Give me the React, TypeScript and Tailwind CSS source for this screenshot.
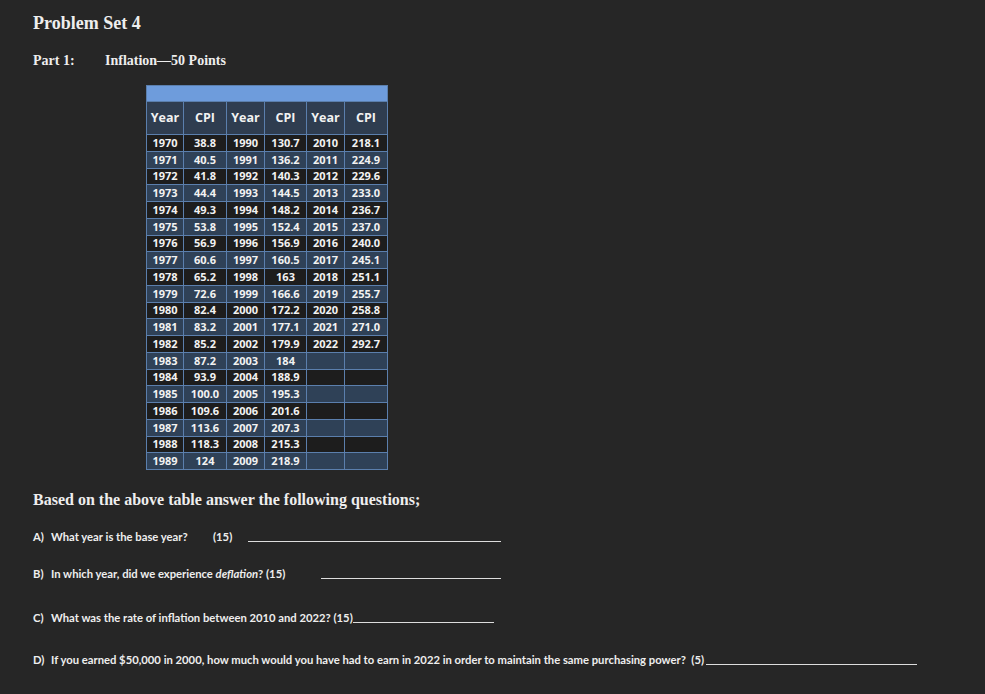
const rows: [string, string, string, string, string, string][] = [
  ["1970", "38.8", "1990", "130.7", "2010", "218.1"],
  ["1971", "40.5", "1991", "136.2", "2011", "224.9"],
  ["1972", "41.8", "1992", "140.3", "2012", "229.6"],
  ["1973", "44.4", "1993", "144.5", "2013", "233.0"],
  ["1974", "49.3", "1994", "148.2", "2014", "236.7"],
  ["1975", "53.8", "1995", "152.4", "2015", "237.0"],
  ["1976", "56.9", "1996", "156.9", "2016", "240.0"],
  ["1977", "60.6", "1997", "160.5", "2017", "245.1"],
  ["1978", "65.2", "1998", "163", "2018", "251.1"],
  ["1979", "72.6", "1999", "166.6", "2019", "255.7"],
  ["1980", "82.4", "2000", "172.2", "2020", "258.8"],
  ["1981", "83.2", "2001", "177.1", "2021", "271.0"],
  ["1982", "85.2", "2002", "179.9", "2022", "292.7"],
  ["1983", "87.2", "2003", "184", "", ""],
  ["1984", "93.9", "2004", "188.9", "", ""],
  ["1985", "100.0", "2005", "195.3", "", ""],
  ["1986", "109.6", "2006", "201.6", "", ""],
  ["1987", "113.6", "2007", "207.3", "", ""],
  ["1988", "118.3", "2008", "215.3", "", ""],
  ["1989", "124", "2009", "218.9", "", ""],
]

const colW = ["w-[37px]", "w-[43px]", "w-[38px]", "w-[42px]", "w-[38px]", "w-[43px]"]
const heads = ["Year", "CPI", "Year", "CPI", "Year", "CPI"]

const serif = { fontFamily: '"Liberation Serif", "Times New Roman", serif' }
const body = { fontFamily: 'Lato, "Open Sans", sans-serif' }

export default function App() {
  return (
    <div className="w-[985px] h-[694px] bg-[#262626] pl-[33px] pt-[13px] text-[#eeeeee] overflow-hidden">
      <h1 style={serif} className="text-[18px] font-bold leading-[20px]">Problem Set 4</h1>
      <div style={serif} className="flex mt-[19px] text-[14px] font-bold leading-[18px]">
        <span className="w-[72px]">Part 1:</span>
        <span>Inflation—50 Points</span>
      </div>

      <table
        style={{ fontFamily: '"Open Sans", "DejaVu Sans", sans-serif' }}
        className="ml-[113px] mt-[15px] border-collapse text-[11px] font-bold text-[#f2f2f2]"
      >
        <tbody>
          <tr className="h-[16px] bg-[#6e9cdc]">
            <td colSpan={6} className="border border-[#5b7fad]"></td>
          </tr>
          <tr className="h-[33px] bg-[#2f3d50]">
            {heads.map((h, i) => (
              <td key={i} className={`${colW[i]} border border-[#5b7fad] text-center text-[12.5px] p-0`}>
                {h}
              </td>
            ))}
          </tr>
          {rows.map((r, ri) => (
            <tr key={ri} className={`h-[16.75px] ${ri % 2 === 0 ? "bg-[#1d1d1d]" : "bg-[#2f4157]"}`}>
              {r.map((c, ci) => (
                <td key={ci} className="border border-[#5b7fad] text-center leading-[14px] p-0">
                  {c}
                </td>
              ))}
            </tr>
          ))}
        </tbody>
      </table>

      <h2 style={serif} className="mt-[20px] text-[16px] font-bold leading-[20px]">
        Based on the above table answer the following questions;
      </h2>

      <div style={body} className="text-[11.25px] font-bold leading-[14px]">
        <div className="flex items-end mt-[20px]">
          <span className="w-[18px]">A)</span>
          <span className="w-[162px]">What year is the base year?</span>
          <span className="w-[35px]">(15)</span>
          <span className="w-[253px] border-b border-[#dddddd] mb-[2px]"></span>
        </div>
        <div className="flex items-end mt-[23px]">
          <span className="w-[18px]">B)</span>
          <span className="w-[270px]">
            In which year, did we experience <i>deflation</i>? (15)
          </span>
          <span className="w-[180px] border-b border-[#dddddd] mb-[2px]"></span>
        </div>
        <div className="flex items-end mt-[30px]">
          <span className="w-[18px]">C)</span>
          <span>What was the rate of inflation between 2010 and 2022? (15)</span>
          <span className="w-[141px] border-b border-[#dddddd] mb-[2px]"></span>
        </div>
        <div className="flex items-end mt-[28px]">
          <span className="w-[18px]">D)</span>
          <span>
            If you earned $50,000 in 2000, how much would you have had to earn in 2022 in order to maintain the same
            purchasing power?&nbsp; (5)
          </span>
          <span className="w-[211px] ml-[2px] border-b border-[#dddddd] mb-[2px]"></span>
        </div>
      </div>
    </div>
  )
}
